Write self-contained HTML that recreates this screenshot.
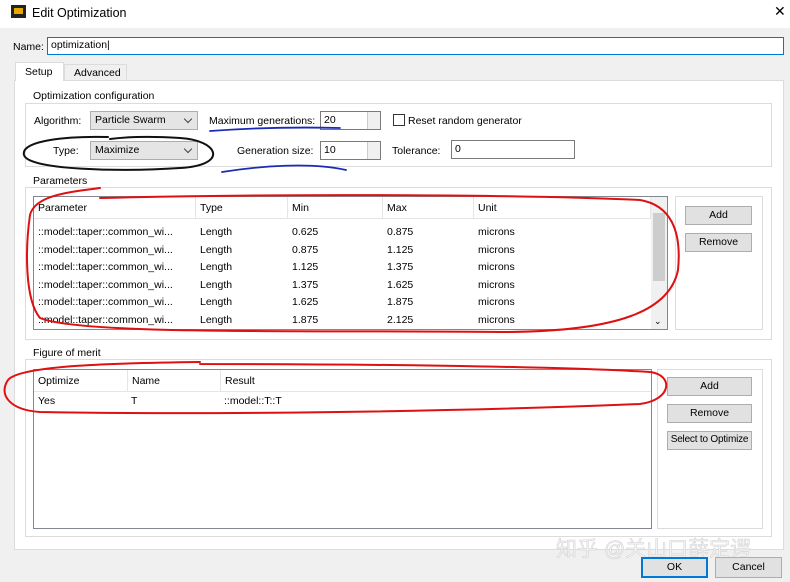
<!DOCTYPE html>
<html><head><meta charset="utf-8"><style>
*{box-sizing:border-box;margin:0;padding:0}
body{width:790px;height:582px;background:#f0f0f0;font-family:"Liberation Sans",sans-serif;font-size:10.5px;color:#000;position:relative;overflow:hidden}
.a{position:absolute}
.t{position:absolute;white-space:nowrap;line-height:12px}
.box{position:absolute;border:1px solid #dcdcdc;background:#fff}
.combo{position:absolute;background:#e5e5e5;border:1px solid #adadad;padding:2px 4px;line-height:13px}
.combo:after{content:"";position:absolute;right:6px;top:4px;width:5px;height:5px;border-right:1px solid #444;border-bottom:1px solid #444;transform:rotate(45deg)}
.inp{position:absolute;background:#fff;border:1px solid #7a7a7a;padding:2px 3px;line-height:13px}
.btn{position:absolute;background:#e1e1e1;border:1px solid #adadad;text-align:center;line-height:16px;white-space:nowrap}
.spin{position:absolute;right:0;top:0;width:13px;height:100%;border-left:1px solid #ccc;background:#f0f0f0}
.tbl{position:absolute;background:#fff;border:1px solid #828790}
.hd{position:absolute;top:0;height:22px;border-right:1px solid #e5e5e5;border-bottom:1px solid #e5e5e5;padding:6px 4px;line-height:11px}
</style></head><body>
<div class="a" style="left:0;top:0;width:790px;height:28px;background:#fff"></div>
<div class="a" style="left:11px;top:5px;width:15px;height:13px;background:#222"></div>
<div class="a" style="left:14px;top:8px;width:9px;height:6px;background:#e8a800"></div>
<div class="t" style="left:32px;top:6px;font-size:12.5px;line-height:14px">Edit Optimization</div>
<div class="t" style="left:774px;top:5px;font-size:14px">✕</div>
<div class="t" style="left:13px;top:41px">Name:</div>
<div class="inp" style="left:47px;top:37px;width:737px;height:18px;border-color:#0078d7;padding:1px 3px">optimization|</div>
<div class="a" style="left:14px;top:80px;width:770px;height:470px;background:#fff;border:1px solid #dcdcdc"></div>
<div class="a" style="left:15px;top:62px;width:49px;height:19px;background:#fff;border:1px solid #dcdcdc;border-bottom:none"></div>
<div class="t" style="left:25px;top:66px">Setup</div>
<div class="a" style="left:64px;top:64px;width:63px;height:16px;background:#f0f0f0;border:1px solid #dcdcdc;border-bottom:none"></div>
<div class="t" style="left:74px;top:67px">Advanced</div>

<div class="box" style="left:25px;top:103px;width:747px;height:64px"></div>
<div class="t" style="left:31px;top:90px;background:#fff;padding:0 2px">Optimization configuration</div>
<div class="t" style="left:34px;top:115px">Algorithm:</div>
<div class="combo" style="left:90px;top:111px;width:108px;height:19px">Particle Swarm</div>
<div class="t" style="left:53px;top:145px">Type:</div>
<div class="combo" style="left:90px;top:141px;width:108px;height:19px">Maximize</div>
<div class="t" style="left:209px;top:115px">Maximum generations:</div>
<div class="inp" style="left:320px;top:111px;width:61px;height:19px">20<div class="spin"></div></div>
<div class="t" style="left:237px;top:145px">Generation size:</div>
<div class="inp" style="left:320px;top:141px;width:61px;height:19px">10<div class="spin"></div></div>
<div class="a" style="left:393px;top:114px;width:12px;height:12px;border:1px solid #333;background:#fff"></div>
<div class="t" style="left:408px;top:115px">Reset random generator</div>
<div class="t" style="left:392px;top:145px">Tolerance:</div>
<div class="inp" style="left:451px;top:140px;width:124px;height:19px">0</div>

<div class="box" style="left:25px;top:187px;width:747px;height:153px"></div>
<div class="t" style="left:31px;top:175px;background:#fff;padding:0 2px">Parameters</div>
<div class="tbl" style="left:33px;top:196px;width:635px;height:134px">
<div class="hd" style="left:0;width:162px">Parameter</div>
<div class="hd" style="left:162px;width:92px">Type</div>
<div class="hd" style="left:254px;width:95px">Min</div>
<div class="hd" style="left:349px;width:91px">Max</div>
<div class="hd" style="left:440px;width:177px">Unit</div>
<div class="a" style="left:617px;top:0;width:16px;height:132px;background:#f0f0f0"></div>
<div class="a" style="left:619px;top:16px;width:12px;height:68px;background:#cdcdcd"></div>
<div class="t" style="left:620px;top:118px;font-size:9px">⌄</div>
</div>
<div class="t" style="left:38px;top:224px;line-height:17.6px">::model::taper::common_wi...<br>::model::taper::common_wi...<br>::model::taper::common_wi...<br>::model::taper::common_wi...<br>::model::taper::common_wi...<br>::model::taper::common_wi...</div>
<div class="t" style="left:200px;top:224px;line-height:17.6px">Length<br>Length<br>Length<br>Length<br>Length<br>Length</div>
<div class="t" style="left:292px;top:224px;line-height:17.6px">0.625<br>0.875<br>1.125<br>1.375<br>1.625<br>1.875</div>
<div class="t" style="left:387px;top:224px;line-height:17.6px">0.875<br>1.125<br>1.375<br>1.625<br>1.875<br>2.125</div>
<div class="t" style="left:478px;top:224px;line-height:17.6px">microns<br>microns<br>microns<br>microns<br>microns<br>microns</div>
<div class="box" style="left:675px;top:196px;width:88px;height:134px"></div>
<div class="btn" style="left:685px;top:206px;width:67px;height:19px">Add</div>
<div class="btn" style="left:685px;top:233px;width:67px;height:19px">Remove</div>

<div class="box" style="left:25px;top:359px;width:747px;height:178px"></div>
<div class="t" style="left:31px;top:347px;background:#fff;padding:0 2px">Figure of merit</div>
<div class="tbl" style="left:33px;top:369px;width:619px;height:160px">
<div class="hd" style="left:0;width:94px">Optimize</div>
<div class="hd" style="left:94px;width:93px">Name</div>
<div class="hd" style="left:187px;width:430px;border-right:none">Result</div>
</div>
<div class="t" style="left:38px;top:395px">Yes</div>
<div class="t" style="left:131px;top:395px">T</div>
<div class="t" style="left:224px;top:395px">::model::T::T</div>
<div class="box" style="left:657px;top:369px;width:106px;height:160px"></div>
<div class="btn" style="left:667px;top:377px;width:85px;height:19px">Add</div>
<div class="btn" style="left:667px;top:404px;width:85px;height:19px">Remove</div>
<div class="btn" style="left:667px;top:431px;width:85px;height:19px;font-size:10px;letter-spacing:-0.2px">Select to Optimize</div>

<div class="t" style="left:556px;top:538px;font-size:21px;line-height:24px;color:#f4f4f4;-webkit-text-stroke:0.5px #cfcfcf;font-family:'Liberation Sans','Noto Sans CJK SC',sans-serif">知乎 @关山口薛定谔</div>
<div class="btn" style="left:641px;top:557px;width:67px;height:21px;border:2px solid #0078d7;line-height:17px">OK</div>
<div class="btn" style="left:715px;top:557px;width:67px;height:21px;line-height:19px">Cancel</div>

<svg class="a" style="left:0;top:0" width="790" height="582" fill="none" stroke-linecap="round">
<path d="M108 137 C70 136 20 140 24 155 C28 170 120 172 180 168 C230 165 218 140 180 138 C150 136 125 137 110 139" stroke="#111" stroke-width="2"/>
<path d="M210 131 C250 128 300 127 340 128" stroke="#1a2bb8" stroke-width="1.8"/>
<path d="M222 172 C260 166 310 162 346 170" stroke="#1a2bb8" stroke-width="1.8"/>
<path d="M100 188 C70 192 35 195 30 215 C25 250 25 300 40 318 C80 335 300 330 500 332 C620 332 670 310 678 270 C682 230 670 205 640 200 C540 195 300 193 100 198" stroke="#d11" stroke-width="2"/>
<path d="M200 362 C120 363 20 365 8 380 C-2 395 10 410 40 412 C200 415 450 412 640 404 C672 400 674 375 650 372 C550 366 350 364 200 364" stroke="#d11" stroke-width="2"/>
</svg>
</body></html>
